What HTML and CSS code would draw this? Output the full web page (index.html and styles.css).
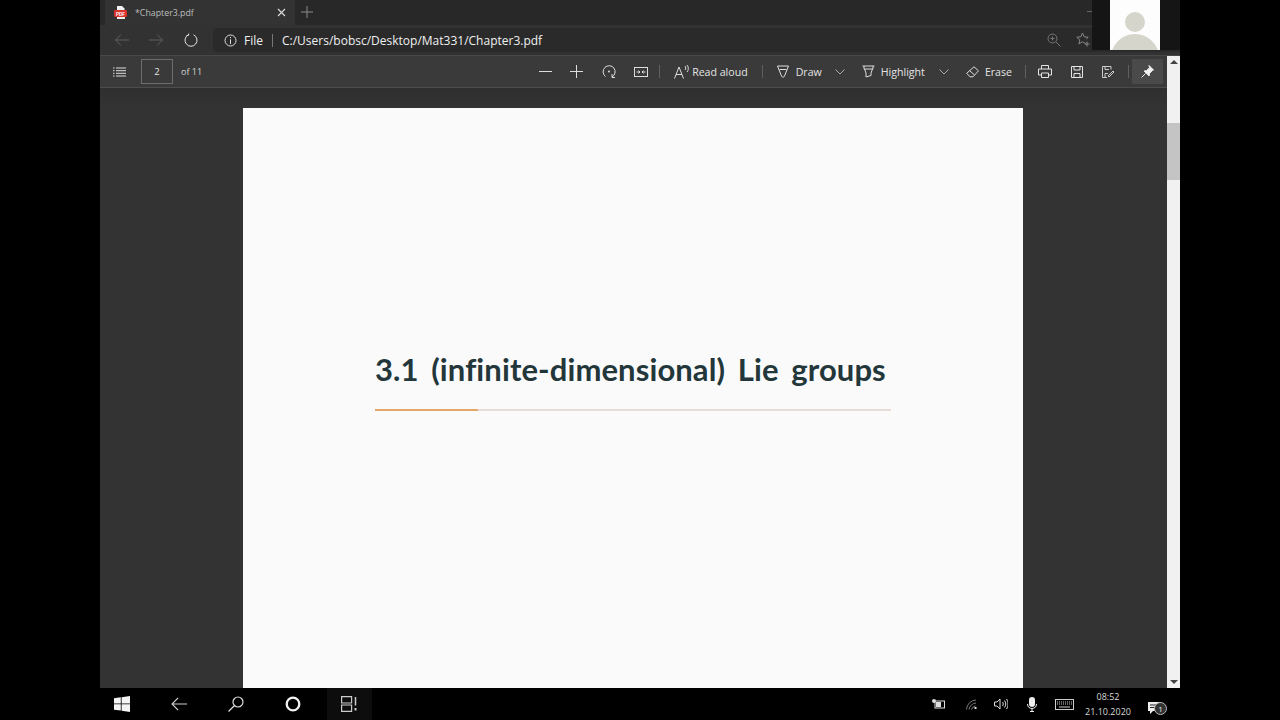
FILE: index.html
```html
<!DOCTYPE html>
<html lang="en">
<head>
<meta charset="utf-8">
<title>Chapter3.pdf</title>
<link rel="stylesheet" href="styles.css">
</head>
<body>
<div class="stage">
  <main class="window">
    <div class="tabstrip">
      <div class="tab">
        <svg class="pdf-icon" width="13" height="13" viewBox="0 0 13 13"><path d="M3 0h5l2.500 2.500V5H3z" fill="#f2f2f2"/><rect x="0" y="4" width="13" height="7" rx="1" fill="#d9302c"/><path d="M3 11h8v2H3z" fill="#eee"/><text class="pdf-mark" x="6.500" y="9.500" text-anchor="middle">PDF</text></svg>
        <span class="tab-title">*Chapter3.pdf</span>
        <svg class="tab-close" width="9" height="9" viewBox="0 0 9 9"><path d="M1 1l7 7M8 1L1 8" stroke="#ddd" stroke-width="1.1"/></svg>
      </div>
      <svg class="new-tab" width="12" height="12" viewBox="0 0 12 12"><path d="M6 0v12M0 6h12" stroke="#8a8a8a" stroke-width="1"/></svg>
      <div class="min-btn"></div>
    </div>
    <div class="addressbar">
      <svg class="nav-icon" width="16" height="14" viewBox="0 0 16 14"><path d="M15 7H1.500M7 1.500L1.500 7 7 12.500" fill="none" stroke="#5f5f5f" stroke-width="1"/></svg>
      <svg class="nav-icon" width="16" height="14" viewBox="0 0 16 14"><path d="M1 7h13.500M9 1.500L14.500 7 9 12.500" fill="none" stroke="#5f5f5f" stroke-width="1"/></svg>
      <svg class="nav-icon reload" width="14" height="14" viewBox="0 0 14 14"><path d="M4.500 1.800A6 6 0 1 0 9.500 1.800M4.800 .5L4.500 2.300 2.500 2.600" fill="none" stroke="#e6e6e6" stroke-width="1"/></svg>
      <div class="urlfield">
        <svg width="13" height="13" viewBox="0 0 13 13"><circle cx="6.500" cy="6.500" r="5.500" fill="none" stroke="#ddd"/><path d="M6.500 3v1.200M6.500 5.300V10" stroke="#ddd"/></svg>
        <span class="file-label">File</span>
        <span class="url-sep"></span>
        <span class="url">C:/Users/bobsc/Desktop/Mat331/Chapter3.pdf</span>
        <span class="spacer"></span>
        <svg width="14" height="14" viewBox="0 0 14 14"><circle cx="5.500" cy="5.500" r="4.500" fill="none" stroke="#777"/><path d="M9 9l4.500 4.500M3.500 5.500h4M5.500 3.500v4" stroke="#777"/></svg>
        <svg class="star" width="14" height="14" viewBox="0 0 14 14"><path d="M9.500 10.500l-3-1.700-3.600 2.100.9-4-3-2.700 4-.4L6.500 0l1.700 3.800 4 .4-2 1.800" fill="none" stroke="#888"/><path d="M11 8.500v5M8.500 11h5" stroke="#888"/></svg>
      </div>
    </div>
    <div class="toolbar">
      <div class="tb-left">
        <svg class="tb-icon" width="13" height="10" viewBox="0 0 13 10"><path d="M3 1h10M3 3.700h10M3 6.300h10M3 9h10M0 1h1.500M0 3.700h1.500M0 6.300h1.500M0 9h1.500" stroke="#ddd"/></svg>
        <span class="page-box">2</span>
        <span class="tb-text">of 11</span>
      </div>
      <div class="tb-right">
        <svg class="t-i w-minus" width="13" height="13" viewBox="0 0 13 13"><path d="M0 6.500h13" stroke="#ddd"/></svg>
        <svg class="t-i w-plus" width="13" height="13" viewBox="0 0 13 13"><path d="M0 6.500h13M6.500 0v13" stroke="#ddd"/></svg>
        <svg class="t-i w-rot" width="14" height="14" viewBox="0 0 14 14"><path d="M3.500 11.500A6 6 0 1 1 10 12M10 9v3.500H13" fill="none" stroke="#ddd"/><circle cx="7" cy="6.500" r="1" fill="#ddd"/></svg>
        <svg class="t-i w-fit" width="14" height="10" viewBox="0 0 14 10"><rect x=".5" y=".5" width="13" height="9" fill="none" stroke="#ddd"/><path d="M2.500 5h3.500M8 5h3.500M4.500 3.500L6 5 4.500 6.500M9.500 3.500L8 5l1.500 1.500" fill="none" stroke="#ddd"/></svg>
        <span class="vsep s1"></span>
        <svg class="t-i w-aloud" width="15" height="14" viewBox="0 0 15 14"><path d="M.5 13.500L5 2l4.500 11.500M2 9.500h6M11 1c1 1 1 3 0 4M13 0c1.800 2 1.800 5 0 7" fill="none" stroke="#ddd"/></svg>
        <span class="tb-label">Read aloud</span>
        <span class="vsep s2"></span>
        <svg class="t-i w-draw" width="12" height="13" viewBox="0 0 12 13"><path d="M.5 1h11L7.500 11l-1.500 1.500L4.500 11zM2.500 4.500h7" fill="none" stroke="#ddd"/></svg>
        <span class="tb-label">Draw</span>
        <svg class="chev" width="10" height="6" viewBox="0 0 10 6"><path d="M.5 .5L5 5l4.500-4.500" fill="none" stroke="#aaa"/></svg>
        <svg class="t-i w-high" width="13" height="13" viewBox="0 0 13 13"><path d="M.5 1h12M2 1v3h9V1M2.500 4l1.500 4v4l5-1.500V8l1.500-4" fill="none" stroke="#ddd"/></svg>
        <span class="tb-label">Highlight</span>
        <svg class="chev ch2" width="10" height="6" viewBox="0 0 10 6"><path d="M.5 .5L5 5l4.500-4.500" fill="none" stroke="#aaa"/></svg>
        <svg class="t-i w-erase" width="13" height="12" viewBox="0 0 13 12"><path d="M8 .8l4.500 4-5.500 6H4l-3.300-3.500zM3.500 4.500l5 4.500" fill="none" stroke="#ddd"/></svg>
        <span class="tb-label">Erase</span>
        <span class="vsep s3"></span>
        <svg class="t-i w-print" width="14" height="13" viewBox="0 0 14 13"><path d="M3.500 4V.5h7V4M3.500 10H.5V4h13v6h-3M3.500 8h7v4.500h-7z" fill="none" stroke="#e4e4e4"/></svg>
        <svg class="t-i w-save" width="12" height="12" viewBox="0 0 12 12"><path d="M.5 .5h11v11H.5zM3 .5v3.500h6V.5M3 11.500V7.500h6v4" fill="none" stroke="#e4e4e4"/></svg>
        <svg class="t-i w-saveas" width="13" height="12" viewBox="0 0 13 12"><path d="M5 11.500H.5V.5h8.500v3M3 .5v3h4M3 11V7.500h3M7 11l5-5-1-1-5 5z" fill="none" stroke="#ccc"/></svg>
        <span class="vsep s4"></span>
        <span class="pin">
          <svg width="13" height="13" viewBox="0 0 13 13"><path d="M8 .5l4.500 4.500-1.200.5-2.800 3-.4 2.500-5-5 2.500-.4 3-2.800zM4.500 8.500L.5 12.500" fill="#f2f2f2" stroke="#f2f2f2"/></svg>
        </span>
      </div>
    </div>
    <div class="viewer">
      <div class="page">
        <div class="slide-head">
          <h1 class="slide-title">3.1 (infinite-dimensional) Lie groups</h1>
          <div class="progress"><span class="progress-fill"></span></div>
        </div>
      </div>
    </div>
    <aside class="scrollbar">
      <span class="arrow-up"></span>
      <span class="thumb"></span>
      <span class="arrow-down"></span>
    </aside>
    <div class="webcam">
      <div class="avatar">
        <span class="a-head"></span>
        <span class="a-body"></span>
      </div>
    </div>
  </main>
  <footer class="taskbar">
    <div class="task-left">
      <svg class="ts start" width="16" height="16" viewBox="0 0 16 16"><path d="M0 2.300l6.800-1v6.200H0zM7.600 1.200L16 0v7.500H7.600zM0 8.300h6.800v6.300L0 13.700zM7.600 8.300H16V16l-8.400-1.200z" fill="#f4f4f4"/></svg>
      <svg class="ts back" width="16" height="14" viewBox="0 0 16 14"><path d="M16 7H1M7 1L1 7l6 6" fill="none" stroke="#ccc" stroke-width="1.100"/></svg>
      <svg class="ts search" width="16" height="16" viewBox="0 0 16 16"><circle cx="10" cy="6" r="5" fill="none" stroke="#ddd" stroke-width="1.200"/><path d="M6.500 9.500L.5 15.500" stroke="#ddd" stroke-width="1.200"/></svg>
      <svg class="ts cortana" width="16" height="16" viewBox="0 0 16 16"><circle cx="8" cy="8" r="6.300" fill="none" stroke="#f2f2f2" stroke-width="2.300"/></svg>
      <span class="ts-task">
        <svg width="17" height="16" viewBox="0 0 17 16"><path d="M.6 .6h10v6.400H.6zM.6 9h10v6.400H.6z" fill="none" stroke="#ccc" stroke-width="1.200"/><path d="M14.500 1v8.500" stroke="#ccc" stroke-width="1.500"/><path d="M14.500 12v2.500" stroke="#ccc" stroke-width="2"/></svg>
      </span>
    </div>
    <div class="tray">
      <svg class="tr battery" width="13" height="10" viewBox="0 0 13 10"><rect x="3" y="2" width="9.500" height="7" fill="none" stroke="#ddd"/><rect x="4" y="3" width="5" height="5" fill="#ddd"/><circle cx="2" cy="2" r="2" fill="#ddd"/></svg>
      <svg class="tr wifi" width="11" height="11" viewBox="0 0 11 11"><path d="M.5 10.500A10 10 0 0 1 10 1M3 10.500A7.500 7.500 0 0 1 10 4M5.500 10.500A5 5 0 0 1 9.500 7" fill="none" stroke="#777"/><path d="M8.500 8h2v2h-2z" fill="#ddd"/></svg>
      <svg class="tr volume" width="14" height="12" viewBox="0 0 14 12"><path d="M.5 4v4H3l3 3V1L3 4zM8.500 4c1 1 1 3 0 4M10.500 2.500c1.700 2 1.700 5 0 7M12.500 1c2 2.700 2 7.300 0 10" fill="none" stroke="#ddd"/></svg>
      <svg class="tr mic" width="10" height="15" viewBox="0 0 10 15"><rect x="2" y="0" width="6" height="10" rx="3" fill="#eee"/><path d="M.5 7c0 6 9 6 9 0M5 12v3M3 14.500h4" fill="none" stroke="#eee"/></svg>
      <svg class="tr keyboard" width="19" height="11" viewBox="0 0 19 11"><rect x=".5" y=".5" width="18" height="10" fill="none" stroke="#ccc"/><path d="M2 3h15M2 5h15" stroke="#ccc" stroke-dasharray="1 1"/><path d="M4 8h11" stroke="#ccc"/></svg>
      <div class="clock"><span>08:52</span><span>21.10.2020</span></div>
      <span class="notify">
        <svg width="13" height="12" viewBox="0 0 13 12"><path d="M0 0h13v9H5l-3 3V9H0z" fill="#eee"/><path d="M2 3h9M2 5.500h6" stroke="#222"/></svg>
        <span class="badge">1</span>
      </span>
    </div>
  </footer>
</div>
</body>
</html>
```

FILE: styles.css
```css
* { box-sizing: border-box; }
html, body { margin: 0; height: 100%; background: #000; overflow: hidden; }
body { font-family: "Open Sans", "Noto Sans", sans-serif; }
.stage { width: 1280px; height: 720px; display: flex; flex-direction: column; align-items: center; }

.window { position: relative; width: 1080px; height: 688px; display: flex; flex-direction: column; background: #333; overflow: hidden; }
.tabstrip { height: 25px; background: #282828; display: flex; align-items: center; flex: none; }
.tab { width: 190px; height: 25px; margin-left: 5px; padding: 0 9px 0 9px; background: #333; display: flex; align-items: center; }
.pdf-icon { flex: none; }
.pdf-mark { font-family: "Liberation Sans", sans-serif; font-size: 4.500px; font-weight: 700; fill: #fff; }
.tab-title { margin-left: 8px; font-size: 8.800px; color: #bdbdbd; flex: 1; }
.tab-close { flex: none; }
.new-tab { margin-left: 6px; margin-top: -2px; }
.min-btn { margin-left: auto; margin-right: 86px; width: 7px; height: 1px; background: #666; margin-top: -3px; }

.addressbar { height: 31px; flex: none; background: #323232; border-bottom: 1px solid #484848; display: flex; align-items: center; padding-left: 14px; }
.nav-icon { flex: none; margin-right: 18px; }
.reload { margin-left: 2px; margin-right: 15px; }
.urlfield { flex: 1; height: 24px; background: #2a2a2a; border-radius: 4px 0 0 4px; display: flex; align-items: center; padding: 0 90px 0 11px; color: #f0f0f0; font-size: 12px; }
.file-label { margin-left: 7px; }
.url-sep { width: 1px; height: 13px; background: #777; margin: 0 9px; }
.spacer { flex: 1; }
.star { margin-left: 15px; }

.toolbar { height: 32px; flex: none; background: #3a3a3a; border-bottom: 1px solid #4d4d4d; display: flex; justify-content: space-between; align-items: center; padding: 0 0 0 13px; width: 1067px; }
.tb-left { display: flex; align-items: center; }
.page-box { width: 32px; height: 25px; margin-left: 15px; border: 1px solid #6d6d6d; color: #e4e4e4; font-size: 9.500px; display: flex; align-items: center; justify-content: center; }
.tb-text { margin-left: 8px; font-size: 9px; color: #d5d5d5; }
.tb-right { display: flex; align-items: center; padding-right: 4px; }
.t-i { flex: none; }
.tb-label { font-size: 10.600px; color: #e4e4e4; }
.w-plus { margin-left: 18px; }
.w-rot { margin-left: 19px; }
.w-fit { margin-left: 18px; }
.vsep { width: 1px; height: 13px; background: #5f5f5f; flex: none; }
.s1 { margin: 0 14px 0 11px; }
.w-aloud { margin-right: 3px; }
.s2 { margin: 0 14px 0 14px; }
.w-draw { margin-right: 7px; }
.chev { margin-left: 13px; flex: none; }
.w-high { margin-left: 17px; margin-right: 6px; }
.ch2 { margin-left: 14px; }
.w-erase { margin-left: 17px; margin-right: 6px; }
.s3 { margin: 0 12px 0 13px; }
.w-save { margin-left: 19px; }
.w-saveas { margin-left: 19px; }
.s4 { margin: 0 3px 0 13px; }
.pin { width: 31px; height: 25px; background: #4a4a4a; display: flex; align-items: center; justify-content: center; }

.viewer { flex: 1; width: 1067px; background: linear-gradient(#2f2f2f, #333 20px); padding: 20px 1px 0 0; display: flex; justify-content: center; overflow: hidden; }
.page { width: 780px; height: 600px; background: #fafafa; flex: none; }
.slide-head { margin: 243px 132px 0; }
.slide-title { margin: 0; font-family: "Lato", sans-serif; font-weight: 700; font-size: 31px; line-height: 36px; color: #23373b; white-space: nowrap; word-spacing: 5px; letter-spacing: .1px; }
.progress { margin-top: 22px; height: 2px; background: #e8ddd6; width: 516px; }
.progress-fill { display: block; width: 103px; height: 2px; background: #e3a869; }

.scrollbar { position: absolute; right: 0; top: 56px; bottom: 0; width: 13px; background: #f1f1f1; }
.thumb { position: absolute; left: 0; right: 0; top: 67px; height: 57px; background: #c4c4c4; }
.arrow-up { position: absolute; left: 3px; top: 4px; border: 4px solid transparent; border-top: 0; border-bottom: 4px solid #444; }
.arrow-down { position: absolute; left: 3px; bottom: 4px; border: 4px solid transparent; border-bottom: 0; border-top: 4px solid #444; }

.webcam { position: absolute; right: 0; top: 0; width: 88px; height: 50px; background: #151515; padding-left: 18px; }
.avatar { position: relative; width: 50px; height: 50px; background: #fdfdfd; overflow: hidden; }
.a-head { position: absolute; left: 15px; top: 12px; width: 20px; height: 20px; border-radius: 50%; background: #d5d5cc; }
.a-body { position: absolute; left: 1px; top: 34px; width: 48px; height: 40px; border-radius: 24px 24px 0 0; background: #d5d5cc; }

.taskbar { width: 1080px; height: 32px; background: #000; display: flex; justify-content: space-between; align-items: center; flex: none; }
.task-left { display: flex; align-items: center; height: 32px; }
.ts { flex: none; }
.start { margin-left: 14px; }
.back { margin-left: 41px; }
.search { margin-left: 41px; }
.cortana { margin-left: 41px; }
.ts-task { width: 45px; height: 32px; margin-left: 26px; background: #0d0d0d; display: flex; align-items: center; justify-content: center; }
.tray { display: flex; align-items: center; height: 32px; }
.tr { flex: none; }
.wifi { margin-left: 21px; }
.volume { margin-left: 17px; }
.mic { margin-left: 19px; }
.keyboard { margin-left: 18px; }
.clock { width: 68px; display: flex; flex-direction: column; align-items: center; font-size: 9px; line-height: 15px; color: #d8d8d8; }
.notify { position: relative; width: 16px; height: 14px; margin: 0 16px 0 6px; }
.badge { position: absolute; left: 6px; top: 5px; width: 13px; height: 13px; border-radius: 50%; background: #333; border: 1px solid #bbb; color: #eee; font-size: 8px; line-height: 11px; text-align: center; }
```
